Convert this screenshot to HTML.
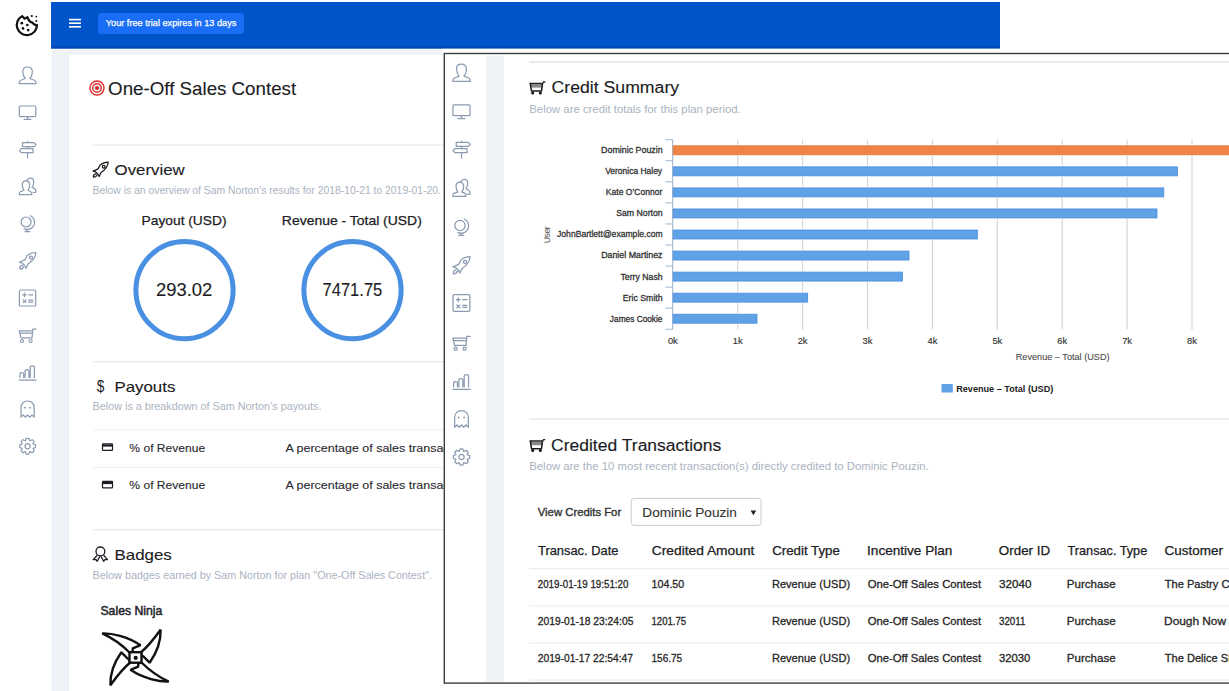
<!DOCTYPE html>
<html><head><meta charset="utf-8"><style>
html,body{margin:0;padding:0;background:#fff;width:1229px;height:691px;overflow:hidden}
svg{position:absolute;left:0;top:0;display:block}
text{font-family:"Liberation Sans",sans-serif;white-space:pre}
</style></head><body>
<svg width="1229" height="691" viewBox="0 0 1229 691">
<g fill="none" stroke="#8a9ab0" stroke-width="1.2" stroke-linejoin="round" stroke-linecap="round"><g transform="translate(27.60 75.50) scale(1.000)"><path d="M-2.3 3C-4.1 1-4.8-1.5-4.8-4C-4.8-6.7-2.8-8.5 0-8.5C2.8-8.5 4.8-6.7 4.8-4C4.8-1.5 4.1 1 2.3 3L6.9 4.8C7.9 5.3 8.4 6 8.4 7L8.4 8.1L-8.3 8.1L-8.3 7C-8.3 6-7.8 5.3-6.8 4.8Z"/></g><g transform="translate(27.60 112.50) scale(1.000)"><rect x="-8.3" y="-6.5" width="16.5" height="10.6" rx="1"/><path d="M0 4.1V6.7M-3.5 6.8H3.3"/></g><g transform="translate(27.60 150.00) scale(1.000)"><path d="M-5.1-7.4H6.5L8.5-5.4L6.5-3.4H-5.1Z M5.4-1.4H-6.2L-8.2 0.6L-6.2 2.6H5.4Z M0-7.4V-8.6M0-3.4V-1.4M0 2.6V7.8"/></g><g transform="translate(27.60 186.50) scale(1.000)"><path d="M-3.4 3.8C-4.8 2.2-5.3 0.3-5.3-1.6C-5.3-4-3.7-5.6-1.6-5.6C0.5-5.6 2.1-4 2.1-1.6C2.1 0.3 1.6 2.2 0.2 3.8L3.2 5.2C3.9 5.6 4.2 6.1 4.2 6.9L4.2 8.2L-8.3 8.2L-8.3 6.9C-8.3 6.1-8 5.6-7.3 5.2Z"/><path d="M-0.8-5.8C0-7.5 1.3-8.3 2.6-8.3C4.6-8.3 6.1-6.8 6.1-4.5C6.1-2.5 5.6-0.8 4.3 0.8L7.2 2.4C7.9 2.8 8.2 3.3 8.2 4.1L8.2 6L5.5 6"/></g><g transform="translate(27.60 222.50) scale(1.000)"><circle cx="-1.5" cy="-0.5" r="5"/><path d="M2.7-6.8A7 7 0 0 1-3.5 6.4M-0.5 6.6V8.9M-2.6 9.1H2.1"/></g><g transform="translate(27.60 260.50) scale(1.000)"><path d="M8.3-8C4-8 1.5-6.5-0.6-4.7L-2.7-0.6L-8.2 1.8L-5.3 2.7C-3.5 4-2.3 5.5-1.6 7.8L0.5 3.4C5 0.5 8-3 8.3-8Z"/><circle cx="3.4" cy="-2.9" r="1.5"/><path d="M-5.2 4.8C-7 5-8 6.5-7.8 8.5C-6 8.6-4.5 7.6-4 6"/></g><g transform="translate(27.60 298.00) scale(1.000)"><rect x="-8.2" y="-8" width="16.3" height="16" rx="1"/><path d="M-4.9-3.2H-1.3M-3.1-5V-1.4M1.2-3.2H5.2M-4.5 1.9L-1.7 4.7M-1.7 1.9L-4.5 4.7M1.2 2.2H5.2M1.2 4.2H5.2"/></g><g transform="translate(27.60 335.50) scale(1.000)"><path d="M8.4-6.3H5.2L4.4 2.4H-6.6L-8.3-4.6H4.9M-7.5-2.3H4.6"/><circle cx="-5.6" cy="5.5" r="1.5"/><circle cx="3" cy="5.5" r="1.5"/></g><g transform="translate(27.60 373.00) scale(1.000)"><path d="M-7.6 4.6V0.6Q-7.6-0.4-5.75-0.4Q-3.9-0.4-3.9 0.6V4.6M-2.5 4.6V-2.3Q-2.5-3.3-0.6-3.3Q1.3-3.3 1.3-2.3V4.6M2.6 4.6V-6.1Q2.6-7.1 4.7-7.1Q6.8-7.1 6.8-6.1V4.6M-8.3 7.2H8.4"/></g><g transform="translate(27.60 409.20) scale(1.000)"><path d="M-6.6 8V-1.6C-6.6-5.6-3.6-8.2 0-8.2C3.6-8.2 6.6-5.6 6.6-1.6V8L4.4 5.8L2.2 8L0 5.8L-2.2 8L-4.4 5.8Z"/><circle cx="-2.8" cy="-1.5" r="0.9" fill="#8a9ab0" stroke="none"/><circle cx="2.6" cy="-1.5" r="0.9" fill="#8a9ab0" stroke="none"/></g><g transform="translate(27.60 446.20) scale(1.000)"><path d="M-2.15 -5.49 L-1.31 -7.89 L1.31 -7.89 L2.15 -5.49 L2.36 -5.41 L4.65 -6.51 L6.51 -4.65 L5.41 -2.36 L5.49 -2.15 L7.89 -1.31 L7.89 1.31 L5.49 2.15 L5.41 2.36 L6.51 4.65 L4.65 6.51 L2.36 5.41 L2.15 5.49 L1.31 7.89 L-1.31 7.89 L-2.15 5.49 L-2.36 5.41 L-4.65 6.51 L-6.51 4.65 L-5.41 2.36 L-5.49 2.15 L-7.89 1.31 L-7.89 -1.31 L-5.49 -2.15 L-5.41 -2.36 L-6.51 -4.65 L-4.65 -6.51 L-2.36 -5.41Z"/><circle cx="0" cy="0" r="2.6"/></g></g>
<rect x="51" y="2" width="949" height="46.5" fill="#0054c9"/><rect x="51" y="46.3" width="949" height="2.2" fill="#0046b4"/>
<rect x="51.4" y="50" width="948.6" height="641" fill="#eff2f6"/>
<rect x="69.1" y="55" width="930.9" height="636" fill="#fff"/>
<rect x="69" y="18.8" width="12" height="1.6" fill="#fff"/>
<rect x="69" y="22.4" width="12" height="1.6" fill="#fff"/>
<rect x="69" y="26.0" width="12" height="1.6" fill="#fff"/>
<rect x="98" y="13" width="146" height="21" rx="3" fill="#1a6ef5"/>
<text x="105.79" y="26.30" font-size="9.50" fill="#fff" stroke="#fff" stroke-width="0.25" text-anchor="start" textLength="130.55" lengthAdjust="spacingAndGlyphs">Your free trial expires in 13 days</text>
<g fill="none" stroke="#dd2c2c" stroke-width="1.4"><circle cx="97" cy="88" r="7"/><circle cx="97" cy="88" r="4.3"/></g><circle cx="97" cy="88" r="2.1" fill="#dd2c2c"/>
<text x="108.12" y="94.80" font-size="18.60" fill="#1c1c24" stroke="#1c1c24" stroke-width="0.12" text-anchor="start" textLength="188.02" lengthAdjust="spacingAndGlyphs">One-Off Sales Contest</text>
<rect x="93" y="144.5" width="907" height="1.3" fill="#e9e9ec"/>
<text x="114.58" y="174.80" font-size="15.20" fill="#1c1c24" stroke="#1c1c24" stroke-width="0.12" text-anchor="start" textLength="70.08" lengthAdjust="spacingAndGlyphs">Overview</text>
<text x="92.61" y="193.80" font-size="10.90" fill="#aab3bf" text-anchor="start" textLength="348.39" lengthAdjust="spacingAndGlyphs">Below is an overview of Sam Norton’s results for 2018-10-21 to 2019-01-20.</text>
<text x="141.58" y="225.20" font-size="13.60" fill="#1c1c24" stroke="#1c1c24" stroke-width="0.25" text-anchor="start" textLength="84.96" lengthAdjust="spacingAndGlyphs">Payout (USD)</text>
<text x="281.88" y="225.20" font-size="13.60" fill="#1c1c24" stroke="#1c1c24" stroke-width="0.25" text-anchor="start" textLength="139.96" lengthAdjust="spacingAndGlyphs">Revenue - Total (USD)</text>
<g fill="none" stroke="#4a90e2" stroke-width="5"><circle cx="184.5" cy="290.2" r="48.6"/><circle cx="352.5" cy="290.2" r="48.6"/></g>
<text x="156.09" y="296.20" font-size="18.00" fill="#1c1c24" stroke="#1c1c24" stroke-width="0.10" text-anchor="start" textLength="56.21" lengthAdjust="spacingAndGlyphs">293.02</text>
<text x="322.58" y="296.20" font-size="18.00" fill="#1c1c24" stroke="#1c1c24" stroke-width="0.10" text-anchor="start" textLength="59.68" lengthAdjust="spacingAndGlyphs">7471.75</text>
<rect x="93" y="361" width="907" height="1.3" fill="#e9e9ec"/>
<text x="96.83" y="392.20" font-size="15.60" fill="#1c1c24" text-anchor="start" textLength="7.62" lengthAdjust="spacingAndGlyphs">$</text>
<text x="114.40" y="391.90" font-size="14.60" fill="#1c1c24" stroke="#1c1c24" stroke-width="0.12" text-anchor="start" textLength="60.93" lengthAdjust="spacingAndGlyphs">Payouts</text>
<text x="92.61" y="410.40" font-size="10.90" fill="#aab3bf" text-anchor="start" textLength="228.89" lengthAdjust="spacingAndGlyphs">Below is a breakdown of Sam Norton’s payouts.</text>
<rect x="93" y="429.3" width="907" height="1" fill="#eeeef0"/>
<rect x="93" y="466.8" width="907" height="1" fill="#eeeef0"/>
<rect x="102.5" y="443.80" width="10" height="6.6" rx="0.6" fill="none" stroke="#1c1c24" stroke-width="1.2"/><rect x="102.5" y="444.40" width="10" height="2.2" fill="#1c1c24"/>
<text x="129.39" y="451.80" font-size="11.60" fill="#2a2a30" stroke="#2a2a30" stroke-width="0.12" text-anchor="start" textLength="75.73" lengthAdjust="spacingAndGlyphs">% of Revenue</text>
<text x="285.48" y="451.80" font-size="11.60" fill="#2a2a30" stroke="#2a2a30" stroke-width="0.12" text-anchor="start" textLength="190.43" lengthAdjust="spacingAndGlyphs">A percentage of sales transactions</text>
<rect x="102.5" y="481.30" width="10" height="6.6" rx="0.6" fill="none" stroke="#1c1c24" stroke-width="1.2"/><rect x="102.5" y="481.90" width="10" height="2.2" fill="#1c1c24"/>
<text x="129.39" y="489.30" font-size="11.60" fill="#2a2a30" stroke="#2a2a30" stroke-width="0.12" text-anchor="start" textLength="75.73" lengthAdjust="spacingAndGlyphs">% of Revenue</text>
<text x="285.48" y="489.30" font-size="11.60" fill="#2a2a30" stroke="#2a2a30" stroke-width="0.12" text-anchor="start" textLength="190.43" lengthAdjust="spacingAndGlyphs">A percentage of sales transactions</text>
<rect x="93" y="529" width="907" height="1.3" fill="#e9e9ec"/>
<text x="114.57" y="559.60" font-size="15.00" fill="#1c1c24" stroke="#1c1c24" stroke-width="0.12" text-anchor="start" textLength="57.17" lengthAdjust="spacingAndGlyphs">Badges</text>
<text x="92.61" y="578.50" font-size="10.90" fill="#aab3bf" text-anchor="start" textLength="339.39" lengthAdjust="spacingAndGlyphs">Below badges earned by Sam Norton for plan &quot;One-Off Sales Contest&quot;.</text>
<text x="100.43" y="614.80" font-size="12.60" fill="#26262c" stroke="#26262c" stroke-width="0.50" text-anchor="start" textLength="61.97" lengthAdjust="spacingAndGlyphs">Sales Ninja</text>
<rect x="441.7" y="48.8" width="800" height="5" fill="#fff"/>
<rect x="444.3" y="53.5" width="800" height="629.6" fill="#fff" stroke="#3c3c3c" stroke-width="1.4"/>
<rect x="486" y="55.6" width="18" height="626" fill="#eff2f6"/>
<g fill="none" stroke="#8a9ab0" stroke-width="1.2" stroke-linejoin="round" stroke-linecap="round"><g transform="translate(461.50 73.00) scale(1.035)"><path d="M-2.3 3C-4.1 1-4.8-1.5-4.8-4C-4.8-6.7-2.8-8.5 0-8.5C2.8-8.5 4.8-6.7 4.8-4C4.8-1.5 4.1 1 2.3 3L6.9 4.8C7.9 5.3 8.4 6 8.4 7L8.4 8.1L-8.3 8.1L-8.3 7C-8.3 6-7.8 5.3-6.8 4.8Z"/></g><g transform="translate(461.50 111.50) scale(1.035)"><rect x="-8.3" y="-6.5" width="16.5" height="10.6" rx="1"/><path d="M0 4.1V6.7M-3.5 6.8H3.3"/></g><g transform="translate(461.50 150.00) scale(1.035)"><path d="M-5.1-7.4H6.5L8.5-5.4L6.5-3.4H-5.1Z M5.4-1.4H-6.2L-8.2 0.6L-6.2 2.6H5.4Z M0-7.4V-8.6M0-3.4V-1.4M0 2.6V7.8"/></g><g transform="translate(461.50 188.00) scale(1.035)"><path d="M-3.4 3.8C-4.8 2.2-5.3 0.3-5.3-1.6C-5.3-4-3.7-5.6-1.6-5.6C0.5-5.6 2.1-4 2.1-1.6C2.1 0.3 1.6 2.2 0.2 3.8L3.2 5.2C3.9 5.6 4.2 6.1 4.2 6.9L4.2 8.2L-8.3 8.2L-8.3 6.9C-8.3 6.1-8 5.6-7.3 5.2Z"/><path d="M-0.8-5.8C0-7.5 1.3-8.3 2.6-8.3C4.6-8.3 6.1-6.8 6.1-4.5C6.1-2.5 5.6-0.8 4.3 0.8L7.2 2.4C7.9 2.8 8.2 3.3 8.2 4.1L8.2 6L5.5 6"/></g><g transform="translate(461.50 226.00) scale(1.035)"><circle cx="-1.5" cy="-0.5" r="5"/><path d="M2.7-6.8A7 7 0 0 1-3.5 6.4M-0.5 6.6V8.9M-2.6 9.1H2.1"/></g><g transform="translate(461.50 265.00) scale(1.035)"><path d="M8.3-8C4-8 1.5-6.5-0.6-4.7L-2.7-0.6L-8.2 1.8L-5.3 2.7C-3.5 4-2.3 5.5-1.6 7.8L0.5 3.4C5 0.5 8-3 8.3-8Z"/><circle cx="3.4" cy="-2.9" r="1.5"/><path d="M-5.2 4.8C-7 5-8 6.5-7.8 8.5C-6 8.6-4.5 7.6-4 6"/></g><g transform="translate(461.50 303.00) scale(1.035)"><rect x="-8.2" y="-8" width="16.3" height="16" rx="1"/><path d="M-4.9-3.2H-1.3M-3.1-5V-1.4M1.2-3.2H5.2M-4.5 1.9L-1.7 4.7M-1.7 1.9L-4.5 4.7M1.2 2.2H5.2M1.2 4.2H5.2"/></g><g transform="translate(461.50 343.00) scale(1.035)"><path d="M8.4-6.3H5.2L4.4 2.4H-6.6L-8.3-4.6H4.9M-7.5-2.3H4.6"/><circle cx="-5.6" cy="5.5" r="1.5"/><circle cx="3" cy="5.5" r="1.5"/></g><g transform="translate(461.50 382.00) scale(1.035)"><path d="M-7.6 4.6V0.6Q-7.6-0.4-5.75-0.4Q-3.9-0.4-3.9 0.6V4.6M-2.5 4.6V-2.3Q-2.5-3.3-0.6-3.3Q1.3-3.3 1.3-2.3V4.6M2.6 4.6V-6.1Q2.6-7.1 4.7-7.1Q6.8-7.1 6.8-6.1V4.6M-8.3 7.2H8.4"/></g><g transform="translate(461.50 419.00) scale(1.035)"><path d="M-6.6 8V-1.6C-6.6-5.6-3.6-8.2 0-8.2C3.6-8.2 6.6-5.6 6.6-1.6V8L4.4 5.8L2.2 8L0 5.8L-2.2 8L-4.4 5.8Z"/><circle cx="-2.8" cy="-1.5" r="0.9" fill="#8a9ab0" stroke="none"/><circle cx="2.6" cy="-1.5" r="0.9" fill="#8a9ab0" stroke="none"/></g><g transform="translate(461.50 457.00) scale(1.035)"><path d="M-2.15 -5.49 L-1.31 -7.89 L1.31 -7.89 L2.15 -5.49 L2.36 -5.41 L4.65 -6.51 L6.51 -4.65 L5.41 -2.36 L5.49 -2.15 L7.89 -1.31 L7.89 1.31 L5.49 2.15 L5.41 2.36 L6.51 4.65 L4.65 6.51 L2.36 5.41 L2.15 5.49 L1.31 7.89 L-1.31 7.89 L-2.15 5.49 L-2.36 5.41 L-4.65 6.51 L-6.51 4.65 L-5.41 2.36 L-5.49 2.15 L-7.89 1.31 L-7.89 -1.31 L-5.49 -2.15 L-5.41 -2.36 L-6.51 -4.65 L-4.65 -6.51 L-2.36 -5.41Z"/><circle cx="0" cy="0" r="2.6"/></g></g>
<rect x="529.3" y="61" width="700" height="1.8" fill="#e9e9ec"/>
<text x="551.50" y="93.20" font-size="15.80" fill="#1c1c24" stroke="#1c1c24" stroke-width="0.12" text-anchor="start" textLength="127.63" lengthAdjust="spacingAndGlyphs">Credit Summary</text>
<text x="529.26" y="112.50" font-size="11.40" fill="#aab3bf" text-anchor="start" textLength="211.48" lengthAdjust="spacingAndGlyphs">Below are credit totals for this plan period.</text>
<rect x="737.10" y="139.5" width="1.2" height="190" fill="#d6d6d6"/>
<rect x="802.00" y="139.5" width="1.2" height="190" fill="#d6d6d6"/>
<rect x="866.90" y="139.5" width="1.2" height="190" fill="#d6d6d6"/>
<rect x="931.80" y="139.5" width="1.2" height="190" fill="#d6d6d6"/>
<rect x="996.70" y="139.5" width="1.2" height="190" fill="#d6d6d6"/>
<rect x="1061.60" y="139.5" width="1.2" height="190" fill="#d6d6d6"/>
<rect x="1126.50" y="139.5" width="1.2" height="190" fill="#d6d6d6"/>
<rect x="1191.40" y="139.5" width="1.2" height="190" fill="#d6d6d6"/>
<rect x="672" y="139.5" width="1.2" height="190" fill="#a9bdd3"/>
<rect x="665.5" y="139.10" width="7" height="1.1" fill="#a9bdd3"/>
<rect x="665.5" y="160.17" width="7" height="1.1" fill="#a9bdd3"/>
<rect x="665.5" y="181.24" width="7" height="1.1" fill="#a9bdd3"/>
<rect x="665.5" y="202.31" width="7" height="1.1" fill="#a9bdd3"/>
<rect x="665.5" y="223.38" width="7" height="1.1" fill="#a9bdd3"/>
<rect x="665.5" y="244.45" width="7" height="1.1" fill="#a9bdd3"/>
<rect x="665.5" y="265.52" width="7" height="1.1" fill="#a9bdd3"/>
<rect x="665.5" y="286.59" width="7" height="1.1" fill="#a9bdd3"/>
<rect x="665.5" y="307.66" width="7" height="1.1" fill="#a9bdd3"/>
<rect x="665.5" y="328.73" width="7" height="1.1" fill="#a9bdd3"/>
<rect x="673.2" y="144.80" width="627.80" height="11" fill="#fff"/>
<rect x="673.2" y="145.80" width="626.80" height="9" fill="#f08446" stroke="#e5732f" stroke-width="0.8"/>
<text x="601.06" y="153.20" font-size="9.00" fill="#333" stroke="#333" stroke-width="0.30" text-anchor="start" textLength="61.62" lengthAdjust="spacingAndGlyphs">Dominic Pouzin</text>
<rect x="673.2" y="165.85" width="505.30" height="11" fill="#fff"/>
<rect x="673.2" y="166.85" width="504.30" height="9" fill="#5fa2e6" stroke="#4a8ddd" stroke-width="0.8"/>
<text x="605.16" y="174.25" font-size="9.00" fill="#333" stroke="#333" stroke-width="0.30" text-anchor="start" textLength="56.96" lengthAdjust="spacingAndGlyphs">Veronica Haley</text>
<rect x="673.2" y="186.90" width="491.60" height="11" fill="#fff"/>
<rect x="673.2" y="187.90" width="490.60" height="9" fill="#5fa2e6" stroke="#4a8ddd" stroke-width="0.8"/>
<text x="605.86" y="195.30" font-size="9.00" fill="#333" stroke="#333" stroke-width="0.30" text-anchor="start" textLength="56.39" lengthAdjust="spacingAndGlyphs">Kate O’Connor</text>
<rect x="673.2" y="207.95" width="484.80" height="11" fill="#fff"/>
<rect x="673.2" y="208.95" width="483.80" height="9" fill="#5fa2e6" stroke="#4a8ddd" stroke-width="0.8"/>
<text x="616.19" y="216.35" font-size="9.00" fill="#333" stroke="#333" stroke-width="0.30" text-anchor="start" textLength="46.49" lengthAdjust="spacingAndGlyphs">Sam Norton</text>
<rect x="673.2" y="229.00" width="305.20" height="11" fill="#fff"/>
<rect x="673.2" y="230.00" width="304.20" height="9" fill="#5fa2e6" stroke="#4a8ddd" stroke-width="0.8"/>
<text x="557.06" y="237.40" font-size="9.00" fill="#333" stroke="#333" stroke-width="0.30" text-anchor="start" textLength="105.63" lengthAdjust="spacingAndGlyphs">JohnBartlett@example.com</text>
<rect x="673.2" y="250.05" width="236.80" height="11" fill="#fff"/>
<rect x="673.2" y="251.05" width="235.80" height="9" fill="#5fa2e6" stroke="#4a8ddd" stroke-width="0.8"/>
<text x="601.16" y="258.45" font-size="9.00" fill="#333" stroke="#333" stroke-width="0.30" text-anchor="start" textLength="61.39" lengthAdjust="spacingAndGlyphs">Daniel Martinez</text>
<rect x="673.2" y="271.10" width="230.20" height="11" fill="#fff"/>
<rect x="673.2" y="272.10" width="229.20" height="9" fill="#5fa2e6" stroke="#4a8ddd" stroke-width="0.8"/>
<text x="620.50" y="279.50" font-size="9.00" fill="#333" stroke="#333" stroke-width="0.30" text-anchor="start" textLength="42.19" lengthAdjust="spacingAndGlyphs">Terry Nash</text>
<rect x="673.2" y="292.15" width="135.50" height="11" fill="#fff"/>
<rect x="673.2" y="293.15" width="134.50" height="9" fill="#5fa2e6" stroke="#4a8ddd" stroke-width="0.8"/>
<text x="622.76" y="300.55" font-size="9.00" fill="#333" stroke="#333" stroke-width="0.30" text-anchor="start" textLength="39.92" lengthAdjust="spacingAndGlyphs">Eric Smith</text>
<rect x="673.2" y="313.20" width="84.80" height="11" fill="#fff"/>
<rect x="673.2" y="314.20" width="83.80" height="9" fill="#5fa2e6" stroke="#4a8ddd" stroke-width="0.8"/>
<text x="609.86" y="321.60" font-size="9.00" fill="#333" stroke="#333" stroke-width="0.30" text-anchor="start" textLength="52.64" lengthAdjust="spacingAndGlyphs">James Cookie</text>
<text x="672.80" y="344.30" font-size="9.30" fill="#333" stroke="#333" stroke-width="0.15" text-anchor="middle">0k</text>
<text x="737.70" y="344.30" font-size="9.30" fill="#333" stroke="#333" stroke-width="0.15" text-anchor="middle">1k</text>
<text x="802.60" y="344.30" font-size="9.30" fill="#333" stroke="#333" stroke-width="0.15" text-anchor="middle">2k</text>
<text x="867.50" y="344.30" font-size="9.30" fill="#333" stroke="#333" stroke-width="0.15" text-anchor="middle">3k</text>
<text x="932.40" y="344.30" font-size="9.30" fill="#333" stroke="#333" stroke-width="0.15" text-anchor="middle">4k</text>
<text x="997.30" y="344.30" font-size="9.30" fill="#333" stroke="#333" stroke-width="0.15" text-anchor="middle">5k</text>
<text x="1062.20" y="344.30" font-size="9.30" fill="#333" stroke="#333" stroke-width="0.15" text-anchor="middle">6k</text>
<text x="1127.10" y="344.30" font-size="9.30" fill="#333" stroke="#333" stroke-width="0.15" text-anchor="middle">7k</text>
<text x="1192.00" y="344.30" font-size="9.30" fill="#333" stroke="#333" stroke-width="0.15" text-anchor="middle">8k</text>
<text x="550" y="234.8" font-size="8.8" fill="#555" text-anchor="middle" transform="rotate(-90 550 234.8)" textLength="17" lengthAdjust="spacing">User</text>
<text x="1015.71" y="359.60" font-size="9.60" fill="#4a4a4a" stroke="#4a4a4a" stroke-width="0.10" text-anchor="start" textLength="93.88" lengthAdjust="spacingAndGlyphs">Revenue – Total (USD)</text>
<rect x="941.5" y="384" width="11.3" height="8.5" fill="#5fa2e6"/>
<text x="956.16" y="392.00" font-size="9.60" fill="#222" font-weight="bold" text-anchor="start" textLength="97.12" lengthAdjust="spacingAndGlyphs">Revenue – Total (USD)</text>
<rect x="529.3" y="418.3" width="700" height="1.5" fill="#e9e9ec"/>
<text x="551.00" y="451.00" font-size="15.80" fill="#1c1c24" stroke="#1c1c24" stroke-width="0.12" text-anchor="start" textLength="170.37" lengthAdjust="spacingAndGlyphs">Credited Transactions</text>
<text x="529.26" y="470.10" font-size="11.40" fill="#aab3bf" text-anchor="start" textLength="399.48" lengthAdjust="spacingAndGlyphs">Below are the 10 most recent transaction(s) directly credited to Dominic Pouzin.</text>
<text x="537.75" y="516.20" font-size="10.90" fill="#333" stroke="#333" stroke-width="0.35" text-anchor="start" textLength="83.43" lengthAdjust="spacingAndGlyphs">View Credits For</text>
<rect x="631.2" y="498.4" width="129.8" height="27" rx="3" fill="#fff" stroke="#c9ccd1" stroke-width="1"/>
<text x="642.32" y="516.80" font-size="13.20" fill="#333" stroke="#333" stroke-width="0.10" text-anchor="start" textLength="94.54" lengthAdjust="spacingAndGlyphs">Dominic Pouzin</text>
<path d="M750.6 510.5 L756.2 510.5 L753.4 515.2 Z" fill="#222"/>
<text x="538.03" y="554.90" font-size="11.90" fill="#1c1c24" stroke="#1c1c24" stroke-width="0.25" text-anchor="start" textLength="80.40" lengthAdjust="spacingAndGlyphs">Transac. Date</text>
<text x="651.80" y="554.90" font-size="11.90" fill="#1c1c24" stroke="#1c1c24" stroke-width="0.25" text-anchor="start" textLength="102.59" lengthAdjust="spacingAndGlyphs">Credited Amount</text>
<text x="772.20" y="554.90" font-size="11.90" fill="#1c1c24" stroke="#1c1c24" stroke-width="0.25" text-anchor="start" textLength="67.63" lengthAdjust="spacingAndGlyphs">Credit Type</text>
<text x="867.10" y="554.90" font-size="11.90" fill="#1c1c24" stroke="#1c1c24" stroke-width="0.25" text-anchor="start" textLength="85.27" lengthAdjust="spacingAndGlyphs">Incentive Plan</text>
<text x="998.84" y="554.90" font-size="11.90" fill="#1c1c24" stroke="#1c1c24" stroke-width="0.25" text-anchor="start" textLength="51.33" lengthAdjust="spacingAndGlyphs">Order ID</text>
<text x="1067.53" y="554.90" font-size="11.90" fill="#1c1c24" stroke="#1c1c24" stroke-width="0.25" text-anchor="start" textLength="79.70" lengthAdjust="spacingAndGlyphs">Transac. Type</text>
<text x="1164.40" y="554.90" font-size="11.90" fill="#1c1c24" stroke="#1c1c24" stroke-width="0.25" text-anchor="start" textLength="58.50" lengthAdjust="spacingAndGlyphs">Customer</text>
<rect x="529.3" y="568" width="700" height="1.2" fill="#ededf0"/>
<text x="537.74" y="588.10" font-size="11.20" fill="#262626" stroke="#262626" stroke-width="0.30" text-anchor="start" textLength="90.70" lengthAdjust="spacingAndGlyphs">2019-01-19 19:51:20</text>
<text x="651.55" y="588.10" font-size="11.20" fill="#262626" stroke="#262626" stroke-width="0.30" text-anchor="start" textLength="32.69" lengthAdjust="spacingAndGlyphs">104.50</text>
<text x="771.88" y="588.10" font-size="11.20" fill="#262626" stroke="#262626" stroke-width="0.30" text-anchor="start" textLength="78.21" lengthAdjust="spacingAndGlyphs">Revenue (USD)</text>
<text x="867.67" y="588.10" font-size="11.20" fill="#262626" stroke="#262626" stroke-width="0.30" text-anchor="start" textLength="113.41" lengthAdjust="spacingAndGlyphs">One-Off Sales Contest</text>
<text x="998.97" y="588.10" font-size="11.20" fill="#262626" stroke="#262626" stroke-width="0.30" text-anchor="start" textLength="32.46" lengthAdjust="spacingAndGlyphs">32040</text>
<text x="1066.88" y="588.10" font-size="11.20" fill="#262626" stroke="#262626" stroke-width="0.30" text-anchor="start" textLength="48.72" lengthAdjust="spacingAndGlyphs">Purchase</text>
<text x="1164.75" y="588.10" font-size="11.20" fill="#262626" stroke="#262626" stroke-width="0.30" text-anchor="start" textLength="90.58" lengthAdjust="spacingAndGlyphs">The Pastry Corner</text>
<rect x="529.3" y="605.30" width="700" height="1.2" fill="#ededf0"/>
<text x="537.74" y="625.00" font-size="11.20" fill="#262626" stroke="#262626" stroke-width="0.30" text-anchor="start" textLength="95.63" lengthAdjust="spacingAndGlyphs">2019-01-18 23:24:05</text>
<text x="651.55" y="625.00" font-size="11.20" fill="#262626" stroke="#262626" stroke-width="0.30" text-anchor="start" textLength="34.62" lengthAdjust="spacingAndGlyphs">1201.75</text>
<text x="771.88" y="625.00" font-size="11.20" fill="#262626" stroke="#262626" stroke-width="0.30" text-anchor="start" textLength="78.21" lengthAdjust="spacingAndGlyphs">Revenue (USD)</text>
<text x="867.67" y="625.00" font-size="11.20" fill="#262626" stroke="#262626" stroke-width="0.30" text-anchor="start" textLength="113.41" lengthAdjust="spacingAndGlyphs">One-Off Sales Contest</text>
<text x="998.97" y="625.00" font-size="11.20" fill="#262626" stroke="#262626" stroke-width="0.30" text-anchor="start" textLength="26.37" lengthAdjust="spacingAndGlyphs">32011</text>
<text x="1066.88" y="625.00" font-size="11.20" fill="#262626" stroke="#262626" stroke-width="0.30" text-anchor="start" textLength="48.72" lengthAdjust="spacingAndGlyphs">Purchase</text>
<text x="1164.08" y="625.00" font-size="11.20" fill="#262626" stroke="#262626" stroke-width="0.30" text-anchor="start" textLength="61.89" lengthAdjust="spacingAndGlyphs">Dough Now</text>
<rect x="529.3" y="642.40" width="700" height="1.2" fill="#ededf0"/>
<text x="537.74" y="661.90" font-size="11.20" fill="#262626" stroke="#262626" stroke-width="0.30" text-anchor="start" textLength="95.23" lengthAdjust="spacingAndGlyphs">2019-01-17 22:54:47</text>
<text x="651.55" y="661.90" font-size="11.20" fill="#262626" stroke="#262626" stroke-width="0.30" text-anchor="start" textLength="30.62" lengthAdjust="spacingAndGlyphs">156.75</text>
<text x="771.88" y="661.90" font-size="11.20" fill="#262626" stroke="#262626" stroke-width="0.30" text-anchor="start" textLength="78.21" lengthAdjust="spacingAndGlyphs">Revenue (USD)</text>
<text x="867.67" y="661.90" font-size="11.20" fill="#262626" stroke="#262626" stroke-width="0.30" text-anchor="start" textLength="113.41" lengthAdjust="spacingAndGlyphs">One-Off Sales Contest</text>
<text x="998.97" y="661.90" font-size="11.20" fill="#262626" stroke="#262626" stroke-width="0.30" text-anchor="start" textLength="31.46" lengthAdjust="spacingAndGlyphs">32030</text>
<text x="1066.88" y="661.90" font-size="11.20" fill="#262626" stroke="#262626" stroke-width="0.30" text-anchor="start" textLength="48.72" lengthAdjust="spacingAndGlyphs">Purchase</text>
<text x="1164.75" y="661.90" font-size="11.20" fill="#262626" stroke="#262626" stroke-width="0.30" text-anchor="start" textLength="81.97" lengthAdjust="spacingAndGlyphs">The Delice Shop</text>
<rect x="529.3" y="679.50" width="700" height="1.2" fill="#ededf0"/>
<g fill="none" stroke="#111" stroke-width="2.2" stroke-linejoin="round"><path d="M37 25.2A10.1 10.1 0 1 1 22.1 16.1L24.6 18.7L27.4 17.1C28.2 19.8 30 22 32.4 22.6C33.5 24.3 35.2 25.2 37 25.2Z"/></g>
<g fill="#111"><circle cx="21.8" cy="23.2" r="1.35"/><circle cx="27.3" cy="25" r="1.35"/><circle cx="23" cy="28.4" r="1.35"/><circle cx="28.2" cy="30.1" r="1.35"/><circle cx="31.8" cy="16" r="1.1"/><circle cx="36.3" cy="16.6" r="0.9"/><circle cx="36.3" cy="20.9" r="1"/></g>
<g fill="none" stroke="#1c1c24" stroke-width="1.35" stroke-linejoin="round" stroke-linecap="round" transform="translate(100.6 169.4) scale(0.92)"><path d="M8.3-8C4-8 1.5-6.5-0.6-4.7L-2.7-0.6L-8.2 1.8L-5.3 2.7C-3.5 4-2.3 5.5-1.6 7.8L0.5 3.4C5 0.5 8-3 8.3-8Z"/><circle cx="3.4" cy="-2.9" r="1.5"/><path d="M-5.2 4.8C-7 5-8 6.5-7.8 8.5C-6 8.6-4.5 7.6-4 6"/></g>
<g fill="none" stroke="#1c1c24" stroke-width="1.3" stroke-linejoin="round"><circle cx="100.4" cy="551.4" r="4.4"/><path d="M97.2 555.2L93.3 559.6L96 559.6L97.2 561.3L99.9 556.3M103.6 555.2L107.5 559.6L104.8 559.6L103.6 561.3L100.9 556.3"/></g>
<g transform="translate(135.5 657.5)" fill="#fff" stroke="#111" stroke-width="2.4" stroke-linejoin="miter" stroke-miterlimit="1.5"><path transform="rotate(0)" d="M-33.2 -24.1C-24 -24.5 -8 -21 5 -12.3L-2.6 -9.1L-3.1 -5.3L-6 -5C-12 -11 -20 -18 -33.2 -24.1Z"/><path transform="rotate(0)" d="M25.1 -27.7C25.5 -15 20 -3 14.1 5.2L7.9 -1L6 -1.9L5.5 -5.3C9 -8 18 -18 25.1 -27.7Z"/><path transform="rotate(180)" d="M-33.2 -24.1C-24 -24.5 -8 -21 5 -12.3L-2.6 -9.1L-3.1 -5.3L-6 -5C-12 -11 -20 -18 -33.2 -24.1Z"/><path transform="rotate(180)" d="M25.1 -27.7C25.5 -15 20 -3 14.1 5.2L7.9 -1L6 -1.9L5.5 -5.3C9 -8 18 -18 25.1 -27.7Z"/><rect x="-6" y="-5.3" width="12" height="10.5"/><circle cx="0.2" cy="0.4" r="2.1" fill="#111" stroke="none"/></g>
<g transform="translate(529.30 81.80) scale(1.000)"><rect x="1.4" y="1.6" width="11.6" height="4.2" fill="#8a8a8a"/><path d="M0.2 1.5H13.4L14.3 0.2H16" fill="none" stroke="#222" stroke-width="1.3"/><path d="M1 1.5L2.2 9.3H12.2L13.2 1.5" fill="none" stroke="#1a1a1a" stroke-width="1.5" stroke-linejoin="round"/><circle cx="3.4" cy="11.2" r="1.5" fill="#111"/><circle cx="11" cy="11.2" r="1.5" fill="#111"/></g>
<g transform="translate(529.30 439.40) scale(1.000)"><rect x="1.4" y="1.6" width="11.6" height="4.2" fill="#8a8a8a"/><path d="M0.2 1.5H13.4L14.3 0.2H16" fill="none" stroke="#222" stroke-width="1.3"/><path d="M1 1.5L2.2 9.3H12.2L13.2 1.5" fill="none" stroke="#1a1a1a" stroke-width="1.5" stroke-linejoin="round"/><circle cx="3.4" cy="11.2" r="1.5" fill="#111"/><circle cx="11" cy="11.2" r="1.5" fill="#111"/></g>
</svg>
</body></html>
